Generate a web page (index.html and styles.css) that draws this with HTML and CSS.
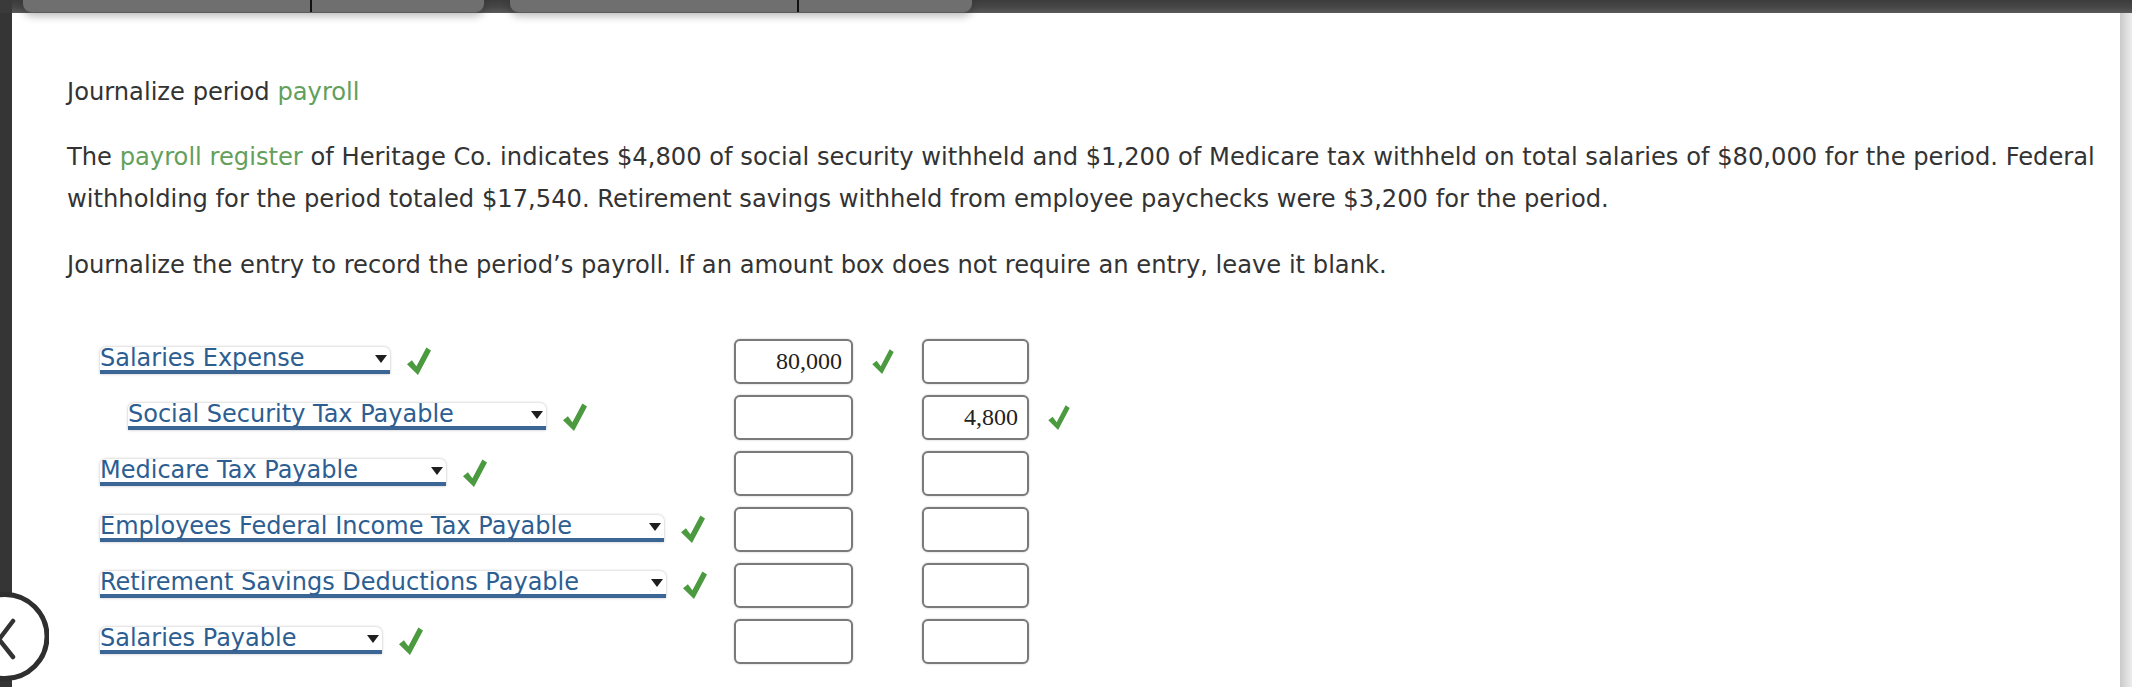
FILE: index.html
```html
<!DOCTYPE html>
<html>
<head>
<meta charset="utf-8">
<link rel="stylesheet" href="styles.css">
</head>
<body>
<div class="topbar">
  <div class="tab tab-a"><div class="tab-part w287"></div><div class="tab-part grow"></div></div>
  <div class="tab tab-b"><div class="tab-part w287"></div><div class="tab-part grow"></div></div>
</div>
<div class="main">
  <div class="leftbar"></div>
  <div class="content">
    <p class="title">Journalize period <span class="link">payroll</span></p>
    <p class="para">The <span class="link">payroll register</span> of Heritage Co. indicates $4,800 of social security withheld and $1,200 of Medicare tax withheld on total salaries of $80,000 for the period. Federal withholding for the period totaled $17,540. Retirement savings withheld from employee paychecks were $3,200 for the period.</p>
    <p class="para second">Journalize the entry to record the period’s payroll. If an amount box does not require an entry, leave it blank.</p>

    <div class="journal">
      <div class="row">
        <div class="acct"><div class="sel" style="width:290px"><span class="sel-text">Salaries Expense</span><span class="arrow"></span></div><svg class="chk" viewBox="0 0 24 28"><path d="M0 17.2 L4.9 13.2 L9.4 19.2 L19.4 0.4 L24 3.4 L11 28 Z"/></svg></div>
        <div class="amt debit">80,000</div>
        <div class="mark"><svg class="chk small" viewBox="0 0 24 28"><path d="M0 17.2 L4.9 13.2 L9.4 19.2 L19.4 0.4 L24 3.4 L11 28 Z"/></svg></div>
        <div class="amt credit"></div>
        <div class="mark"></div>
      </div>
      <div class="row">
        <div class="acct indent"><div class="sel" style="width:418px"><span class="sel-text">Social Security Tax Payable</span><span class="arrow"></span></div><svg class="chk" viewBox="0 0 24 28"><path d="M0 17.2 L4.9 13.2 L9.4 19.2 L19.4 0.4 L24 3.4 L11 28 Z"/></svg></div>
        <div class="amt debit"></div>
        <div class="mark"></div>
        <div class="amt credit">4,800</div>
        <div class="mark"><svg class="chk small" viewBox="0 0 24 28"><path d="M0 17.2 L4.9 13.2 L9.4 19.2 L19.4 0.4 L24 3.4 L11 28 Z"/></svg></div>
      </div>
      <div class="row">
        <div class="acct"><div class="sel" style="width:346px"><span class="sel-text">Medicare Tax Payable</span><span class="arrow"></span></div><svg class="chk" viewBox="0 0 24 28"><path d="M0 17.2 L4.9 13.2 L9.4 19.2 L19.4 0.4 L24 3.4 L11 28 Z"/></svg></div>
        <div class="amt debit"></div>
        <div class="mark"></div>
        <div class="amt credit"></div>
        <div class="mark"></div>
      </div>
      <div class="row">
        <div class="acct"><div class="sel" style="width:564px"><span class="sel-text">Employees Federal Income Tax Payable</span><span class="arrow"></span></div><svg class="chk" viewBox="0 0 24 28"><path d="M0 17.2 L4.9 13.2 L9.4 19.2 L19.4 0.4 L24 3.4 L11 28 Z"/></svg></div>
        <div class="amt debit"></div>
        <div class="mark"></div>
        <div class="amt credit"></div>
        <div class="mark"></div>
      </div>
      <div class="row">
        <div class="acct"><div class="sel" style="width:566px"><span class="sel-text">Retirement Savings Deductions Payable</span><span class="arrow"></span></div><svg class="chk" viewBox="0 0 24 28"><path d="M0 17.2 L4.9 13.2 L9.4 19.2 L19.4 0.4 L24 3.4 L11 28 Z"/></svg></div>
        <div class="amt debit"></div>
        <div class="mark"></div>
        <div class="amt credit"></div>
        <div class="mark"></div>
      </div>
      <div class="row">
        <div class="acct"><div class="sel" style="width:282px"><span class="sel-text">Salaries Payable</span><span class="arrow"></span></div><svg class="chk" viewBox="0 0 24 28"><path d="M0 17.2 L4.9 13.2 L9.4 19.2 L19.4 0.4 L24 3.4 L11 28 Z"/></svg></div>
        <div class="amt debit"></div>
        <div class="mark"></div>
        <div class="amt credit"></div>
        <div class="mark"></div>
      </div>
    </div>
  </div>
  <div class="rightshade"></div>
</div>
<svg class="back-btn" width="94" height="92" viewBox="0 0 94 92">
  <circle cx="50" cy="45.5" r="42" fill="#fff" stroke="#2f2f2f" stroke-width="5"/>
  <polyline points="58,30 44,48.5 58,66" fill="none" stroke="#333" stroke-width="4.5" stroke-linecap="round" stroke-linejoin="round"/>
</svg>
</body>
</html>
```

FILE: styles.css
```css
html, body {
  margin: 0;
  padding: 0;
  background: #fff;
  overflow: hidden;
  width: 2132px;
  height: 687px;
}

body {
  font-family: "DejaVu Sans", Verdana, sans-serif;
  color: #333;
  position: relative;
}

.topbar {
  position: relative;
  z-index: 2;
  height: 13px;
  background: linear-gradient(#3c3c3c, #474747 55%, #5a5a5a);
  display: flex;
  border-left: 12px solid #3a3a3a;
  box-sizing: border-box;
}

.tab {
  height: 12px;
  display: flex;
  border-radius: 0 0 9px 9px;
  background: #6f6f6f;
  box-shadow: 0 3px 8px rgba(0, 0, 0, 0.28);
  border-bottom: 1px solid #5b5b5b;
  overflow: hidden;
}

.tab-a {
  margin-left: 11px;
  width: 461px;
  position: relative;
}

.tab-b {
  margin-left: 26px;
  width: 462px;
}

.tab-part {
  height: 100%;
}

.tab-part.w287 {
  width: 287px;
  border-right: 2px solid #111;
}

.tab-part.grow {
  flex: 1;
}

.tab-a::before {
  content: "";
  position: absolute;
  left: -11px;
  top: 0;
  width: 2px;
  height: 13px;
  background: #111;
}

.main {
  display: flex;
  height: 674px;
}

.leftbar {
  width: 12px;
  background: #353535;
  flex: none;
}

.rightshade {
  width: 12px;
  flex: none;
  background: linear-gradient(90deg, #c9c9c9, #dcdcdc 50%, #ececec);
}

.content {
  flex: 1;
  padding: 58px 11px 0 55px;
  min-width: 0;
}

.title, .para {
  margin: 0;
  font-size: 24.2px;
  line-height: 42px;
}

.title {
  margin-bottom: 23px;
}

.para {
  margin-bottom: 24px;
}

.para.second {
  margin-bottom: 0;
}

.link {
  color: #62a05c;
}

.journal {
  margin-top: 47px;
  margin-left: 33px;
  display: flex;
  flex-direction: column;
}

.row {
  display: grid;
  grid-template-columns: 634px 119px 69px 107px 1fr;
  align-items: center;
  height: 56px;
}

.acct {
  display: flex;
  align-items: center;
  gap: 17px;
}

.acct.indent {
  padding-left: 28px;
}

.sel {
  box-sizing: border-box;
  height: 27px;
  display: flex;
  align-items: flex-start;
  background: #fff;
  border-bottom: 4px solid #3a6594;
  border-radius: 6px 6px 0 0;
  box-shadow: 0 0 3px rgba(0, 0, 0, 0.28);
  margin-top: -1px;
}

.sel-text {
  font-size: 24px;
  line-height: 23px;
  color: #2d5e92;
  white-space: nowrap;
}

.arrow {
  margin-left: auto;
  margin-right: 3px;
  margin-top: 8px;
  width: 0;
  height: 0;
  border-left: 6.5px solid transparent;
  border-right: 6.5px solid transparent;
  border-top: 8px solid #1e1e1e;
}

.chk {
  width: 24px;
  height: 28px;
  fill: #4b9a3f;
  flex: none;
}

.chk.small {
  width: 22px;
  height: 25px;
  display: block;
}

.mark {
  padding-left: 19px;
  display: flex;
  align-items: center;
}

.amt {
  box-sizing: border-box;
  height: 45px;
  border: 2px solid #7a7a7a;
  border-radius: 6px;
  background: #fff;
  box-shadow: 0 0 2px rgba(0, 0, 0, 0.25);
  font-family: "Liberation Serif", "Times New Roman", serif;
  font-size: 24px;
  color: #222;
  text-align: right;
  padding-right: 9px;
  line-height: 41px;
}

.back-btn {
  position: absolute;
  left: -45px;
  top: 591px;
  z-index: 3;
}
```
